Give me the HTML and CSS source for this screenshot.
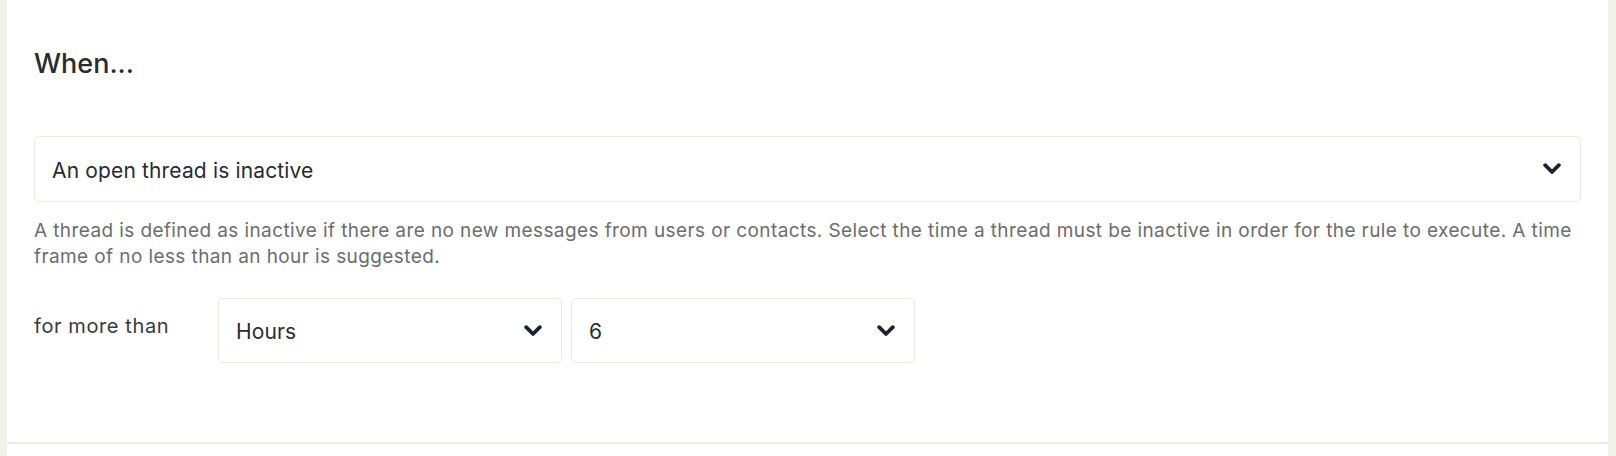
FILE: index.html
```html
<!DOCTYPE html>
<html lang="en">
<head>
<meta charset="utf-8">
<title>Rule</title>
<link rel="stylesheet" href="styles.css">
</head>
<body>
<div class="page">
  <section class="panel">
    <h2 class="title">When...</h2>
    <div class="select select-wide">
      <span class="select-value">An open thread is inactive</span>
      <svg class="chev" viewBox="0 0 18 12" width="18" height="12"><polyline points="2.2,2.2 9,9 15.8,2.2"/></svg>
    </div>
    <p class="help">A thread is defined as inactive if there are no new messages from users or contacts. Select the time a thread must be inactive in order for the rule to execute. A time frame of no less than an hour is suggested.</p>
    <div class="row">
      <div class="label">for more than</div>
      <div class="select select-small">
        <span class="select-value">Hours</span>
        <svg class="chev" viewBox="0 0 18 12" width="18" height="12"><polyline points="2.2,2.2 9,9 15.8,2.2"/></svg>
      </div>
      <div class="select select-small">
        <span class="select-value">6</span>
        <svg class="chev" viewBox="0 0 18 12" width="18" height="12"><polyline points="2.2,2.2 9,9 15.8,2.2"/></svg>
      </div>
    </div>
  </section>
  <section class="panel-next"></section>
</div>
</body>
</html>
```
FILE: styles.css
```css
html, body {
  margin: 0;
  padding: 0;
  background: #f4f0ea;
}
body {
  font-family: "Inter", "Roboto", sans-serif;
}
.page {
  margin: 0 8px 0 7px;
  height: 456px;
  background: #ffffff;
}
.panel {
  padding: 48px 27px 79px 27px;
  border-bottom: 2px solid #efebe5;
}
.title {
  margin: 0;
  font-size: 27px;
  line-height: 32px;
  font-weight: 500;
  color: #2b2b2b;
}
.select {
  display: flex;
  align-items: center;
  justify-content: space-between;
  box-sizing: border-box;
  height: 66px;
  border: 1px solid #ebe7e1;
  border-radius: 5px;
  background: #fff;
  padding: 0 19px 0 17px;
}
.select-wide {
  margin-top: 56px;
}
.select-value {
  font-size: 21px;
  letter-spacing: 0.15px;
  color: #272b33;
  padding-top: 2px;
}
.chev {
  fill: none;
  stroke: #1b2331;
  stroke-width: 3.8;
  stroke-linecap: round;
  stroke-linejoin: round;
  flex: none;
}
.help {
  margin: 16px 0 0 0;
  font-size: 19px;
  line-height: 26px;
  letter-spacing: 0.4px;
  color: #6d6d6d;
}
.row {
  display: flex;
  align-items: flex-start;
  gap: 9px;
  margin-top: 28px;
}
.label {
  width: 175px;
  padding-top: 14px;
  font-size: 20px;
  line-height: 28px;
  letter-spacing: 0.6px;
  color: #3a3a3a;
}
.select-small {
  width: 344px;
  height: 65px;
}
.panel-next {
  height: 20px;
}
```
